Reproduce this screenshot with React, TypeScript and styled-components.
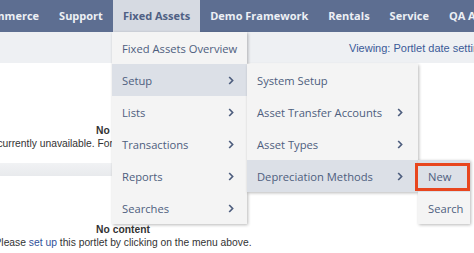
import { createGlobalStyle } from 'styled-components';
import styled from 'styled-components';
import type { FC } from 'react';

const GlobalStyle = createGlobalStyle`
    html, body {
        margin: 0;
        padding: 0;
        background: #fff;
        overflow: hidden;
    }
`;

const Page = styled.div`
    position: relative;
    width: 474px;
    height: 253px;
    overflow: hidden;
    background: #fff;
    font-family: "Liberation Sans", Arial, sans-serif;
`;

const TopNav = styled.nav`
    display: flex;
    height: 32px;
    background: #5d6e91;
    margin-left: -30px;
    white-space: nowrap;
`;

const NavItem = styled.div<{ $active?: boolean }>`
    padding: 0 10px;
    height: 32px;
    line-height: 32px;
    font-family: "Open Sans", sans-serif;
    font-weight: 700;
    font-size: 11px;
    color: ${(p) => (p.$active ? '#4f6084' : '#edf0f5')};
    background: ${(p) => (p.$active ? '#d6dae2' : 'transparent')};
`;

const SubHeader = styled.div`
    display: flex;
    align-items: center;
    height: 31px;
    padding-left: 349px;
    background: #eef0f3;
    color: #3b5a98;
    font-size: 11px;
    white-space: nowrap;
`;

const Content = styled.div`
    display: grid;
    grid-template-columns: 246px 1fr;
`;

const LeftColumn = styled.div`
    display: flex;
    flex-direction: column;
`;

const Message = styled.div<{ $top: number }>`
    display: flex;
    flex-direction: column;
    align-items: center;
    margin-top: ${(p) => p.$top}px;
    font-size: 10.3px;
    line-height: 12.5px;
    color: #333;
    white-space: nowrap;
`;

const MessageTitle = styled.div`
    font-weight: 700;
`;

const Link = styled.span`
    color: #2f4f9a;
`;

const PortletBar = styled.div`
    margin-top: 13px;
    height: 13px;
    background: linear-gradient(#f1f2f4, #e8eaed);
`;

const Menu = styled.div<{ $width: number }>`
    position: absolute;
    width: ${(p) => p.$width}px;
    background: #f4f4f4;
    box-shadow: 1px 1px 3px rgba(0, 0, 0, 0.28);
`;

const RootMenu = styled(Menu)`
    top: 32px;
    left: 112px;
`;

const SubMenu = styled(Menu)`
    top: 0;
    left: 100%;
`;

const MenuItem = styled.div<{ $active?: boolean; $pad?: number }>`
    position: relative;
    display: flex;
    align-items: center;
    justify-content: space-between;
    height: 32px;
    padding: 0 ${(p) => p.$pad ?? 13}px 0 10px;
    font-family: "Open Sans", sans-serif;
    font-size: 11.2px;
    color: #4e5e7e;
    background: ${(p) => (p.$active ? '#dce0e7' : 'transparent')};
    white-space: nowrap;
`;

const Marked = styled.div`
    position: absolute;
    top: 3px;
    bottom: 1px;
    left: -3px;
    right: 0;
    border: 3px solid #e8461e;
    pointer-events: none;
`;

const Chevron: FC = () => (
    <svg width="6" height="9" viewBox="0 0 6 9">
        <path d="M1.2 1 L4.6 4.5 L1.2 8" fill="none" stroke="#4e5e7e" strokeWidth="1.7" />
    </svg>
);

const navItems = ['Commerce', 'Support', 'Fixed Assets', 'Demo Framework', 'Rentals', 'Service', 'QA Admin'];

const App: FC = () => {
    return (
        <Page>
            <GlobalStyle />
            <TopNav>
                {navItems.map((item) => (
                    <NavItem key={item} $active={item === 'Fixed Assets'}>
                        {item}
                    </NavItem>
                ))}
            </TopNav>

            <SubHeader>Viewing: Portlet date settings</SubHeader>

            <Content>
                <LeftColumn>
                    <Message $top={62}>
                        <MessageTitle>No content</MessageTitle>
                        <div>The portlet is currently unavailable. For more information contact the administrator.</div>
                    </Message>

                    <PortletBar />

                    <Message $top={48}>
                        <MessageTitle>No content</MessageTitle>
                        <div>
                            Please <Link>set up</Link> this portlet by clicking on the menu above.
                        </div>
                    </Message>
                </LeftColumn>
                <div />
            </Content>

            <RootMenu $width={135}>
                <MenuItem>Fixed Assets Overview</MenuItem>
                <MenuItem $active>
                    Setup
                    <Chevron />
                    <SubMenu $width={171}>
                        <MenuItem $pad={15}>System Setup</MenuItem>
                        <MenuItem $pad={15}>
                            Asset Transfer Accounts
                            <Chevron />
                        </MenuItem>
                        <MenuItem $pad={15}>
                            Asset Types
                            <Chevron />
                        </MenuItem>
                        <MenuItem $active $pad={15}>
                            Depreciation Methods
                            <Chevron />
                            <SubMenu $width={52}>
                                <MenuItem $active>
                                    New
                                    <Marked />
                                </MenuItem>
                                <MenuItem>Search</MenuItem>
                            </SubMenu>
                        </MenuItem>
                    </SubMenu>
                </MenuItem>
                <MenuItem>
                    Lists
                    <Chevron />
                </MenuItem>
                <MenuItem>
                    Transactions
                    <Chevron />
                </MenuItem>
                <MenuItem>
                    Reports
                    <Chevron />
                </MenuItem>
                <MenuItem>
                    Searches
                    <Chevron />
                </MenuItem>
            </RootMenu>
        </Page>
    );
};

export default App;
